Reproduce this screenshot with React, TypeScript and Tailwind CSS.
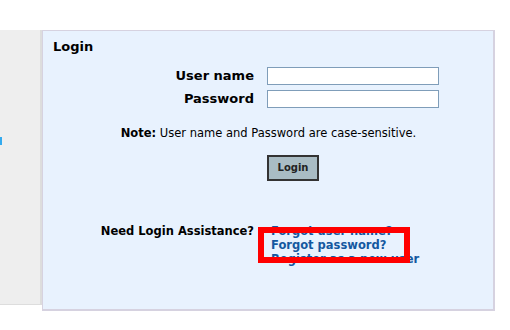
const App = () => {
  return (
    <div className="w-[510px] h-[330px] bg-white pt-[30px] font-['DejaVu_Sans',Verdana,sans-serif] text-black">
      <div className="flex items-start">
        {/* left nav stub */}
        <div className="relative w-[42px] h-[275px] bg-[#eeeeee] border-r-2 border-b border-[#dddddd] overflow-hidden">
          <span className="absolute left-0 top-[107px] w-[2px] h-[8px] bg-[#33aaee]" />
        </div>

        {/* login panel */}
        <div className="relative w-[453px] h-[281px] bg-[#e8f2fe] border-2 border-l border-t border-[#d6d2e0] pl-[10px] pt-[8px]">
          <h2 className="text-[13px] font-bold leading-[16px]">Login</h2>

          <div className="mt-[12px] grid grid-cols-[201px_172px] gap-x-[13px] gap-y-[5px] items-center">
            <label className="text-right text-[13px] font-bold leading-[18px]">User name</label>
            <input className="h-[18px] bg-white border border-[#7f9db9] outline-none" />
            <label className="text-right text-[13px] font-bold leading-[18px]">Password</label>
            <input type="password" className="h-[18px] bg-white border border-[#7f9db9] outline-none" />
          </div>

          <p className="mt-[18px] w-[431px] text-center text-[11.5px] leading-[14px]">
            <b>Note:</b> User name and Password are case-sensitive.
          </p>

          <div className="mt-[14px] pl-[214px]">
            <button className="w-[52px] h-[26px] bg-[#a9bcc4] border-2 border-[#333333] text-[10px] font-bold text-[#222222]">
              Login
            </button>
          </div>

          <div className="mt-[43px] grid grid-cols-[201px_auto] gap-x-[17px] text-[11.5px] leading-[14px]">
            <span className="text-right font-bold">Need Login Assistance?</span>
            <div className="flex flex-col font-bold text-[#1458a0]">
              <a>Forgot user name?</a>
              <a>Forgot password?</a>
              <a>Register as a new user</a>
            </div>
          </div>

          {/* red highlight annotation */}
          <div className="absolute left-[215px] top-[196px] w-[152px] h-[36px] border-[6px] border-[#ff0000] pointer-events-none" />
        </div>
      </div>
    </div>
  );
};

export default App;
